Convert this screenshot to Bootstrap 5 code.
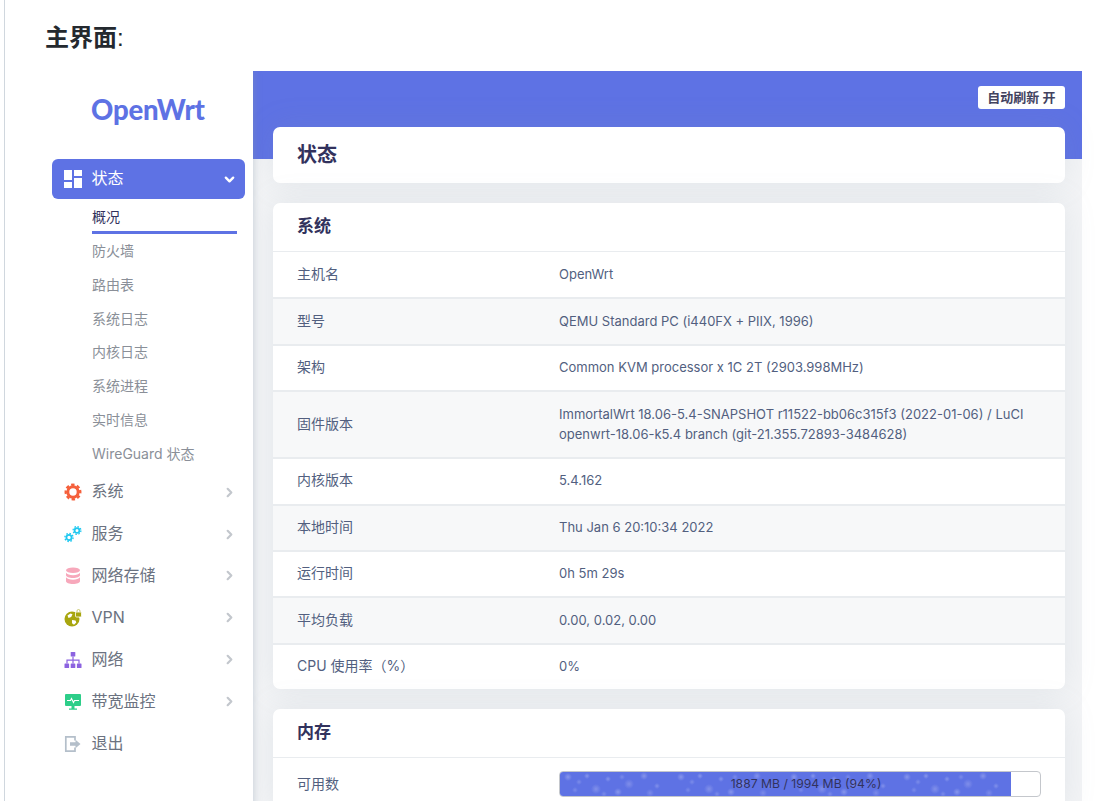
<!DOCTYPE html>
<html lang="zh-CN">
<head>
<meta charset="utf-8">
<title>OpenWrt</title>
<link href="https://cdn.jsdelivr.net/npm/bootstrap@5.3.0/dist/css/bootstrap.min.css" rel="stylesheet">
<style>
html,body{height:801px;overflow:hidden;background:#fff}
body{font-family:"Inter","Noto Sans CJK SC",sans-serif;color:#525f7f}
.docpage{height:801px;margin-left:4px;border-left:1px solid #d0d7de;overflow:hidden}
.doctitle{font-family:"Liberation Sans","Noto Sans CJK SC",sans-serif;font-size:24px;font-weight:700;line-height:32px;color:#24292f;margin:0;padding:22px 0 17px 40px;height:71px}
.doctitle span{font-weight:400}
.shot{width:1077px;height:800px}
.sidenav{width:248px;flex:none;height:100%;background:#fff;box-shadow:0 0 8px rgba(136,152,170,.45);clip-path:inset(0 -14px 0 0);position:relative;z-index:2;padding-left:47px;padding-right:8px}
.brandmark{height:88px;padding-left:39px;padding-top:18px;font-family:"Lato","Noto Sans CJK SC",sans-serif;font-weight:900;font-size:27.5px;line-height:42px;color:#5e72e4;letter-spacing:-.2px}
.menuitem{height:41.9px;display:flex;align-items:center;font-size:16px;color:#6b7280;padding-left:12px;padding-right:10px}
.menuitem>span{position:relative;top:-1px;left:-.5px}
.menuitem svg.ico{width:18px;height:18px;flex:none;margin-right:10px}
.menuitem .chev{margin-left:auto;width:11px;height:11px;flex:none}
.menuitem.onitem{height:40px;background:#5e72e4;color:#fff;border-radius:6px;margin-bottom:1px}
.subitem{height:33.75px;line-height:32px;margin-left:40px;margin-right:8px;font-size:14px;color:#8a8f98}
.subitem.onsub{color:#32325d;height:34px;border-bottom:3px solid #5e72e4;margin-bottom:1px;line-height:33px}
.mainpane{width:829px;flex:none;height:100%;background:#f3f4f6;position:relative}
.bluehead{height:88px;background:#5e72e4;padding:15px 17px 0 0;text-align:right}
.refreshbtn{display:inline-block;background:#fff;border-radius:3px;font-size:13px;font-weight:600;line-height:22px;height:23px;padding:0 9.5px;color:#43435f;vertical-align:top}
.panels{margin:-32px 17px 0 20px;position:relative}
.panelbox{background:#fff;border-radius:7px;box-shadow:0 0 32px rgba(136,152,170,.15);margin-bottom:20px;overflow:hidden}
.pagehead{height:56px;line-height:57px;padding-left:24px;font-size:20px;font-weight:700;color:#32325d}
.sectionhead{height:49px;line-height:46px;padding-left:24px;font-size:17px;font-weight:700;color:#32325d;border-bottom:1px solid #e9ecef}
.infotable{margin:0;font-size:13px;color:#525f7f;--bs-table-bg:transparent;--bs-table-color:#525f7f;table-layout:fixed}
.infotable td{border-bottom:2px solid #e9ecef;padding:0 24px 2px;height:46.4px;vertical-align:middle;line-height:20px}
.infotable tr:nth-child(even) td{background:#f7f8f9}
.infotable tr:last-child td{border-bottom:0;height:45px}
.infotable .labelcol{width:262px;font-size:14px}
.infotable .tallrow td{height:67px}
.infotable tr.memrow:last-child td{height:52px;padding-bottom:0;padding-top:0}
.usagebar{height:26px;border:1px solid #c4c7cc;border-radius:4px;position:relative;overflow:hidden;background:#fff;font-size:12.2px;line-height:24px;color:#32325d;text-align:center;padding-left:12px}
.usagefill{position:absolute;left:0;top:0;bottom:0;background-color:#5e72e4;background-image:radial-gradient(circle at 8px 5px,#8796ec,transparent 4px),radial-gradient(circle at 15px 18px,#7a8ae9,transparent 3px),radial-gradient(circle at 19px 10px,#7c8ce9,transparent 3px),radial-gradient(circle at 27px 4px,#8796ec,transparent 3px),radial-gradient(circle at 36px 17px,#8190ea,transparent 5px),radial-gradient(circle at 44px 22px,#7a8ae9,transparent 3px),radial-gradient(circle at 48px 7px,#8493eb,transparent 3px),radial-gradient(circle at 58px 20px,#8796ec,transparent 4px),radial-gradient(circle at 62px 5px,#7a8ae9,transparent 3px),radial-gradient(circle at 69px 12px,#7f8eea,transparent 5px),radial-gradient(circle at 84px 4px,#8493eb,transparent 4px),radial-gradient(circle at 90px 21px,#7a8ae9,transparent 4px),radial-gradient(circle at 97px 14px,#8190ea,transparent 3px);background-size:113px 26px}
.usagetext{position:relative}
</style>
</head>
<body>
<div class="docpage">
  <h2 class="doctitle">主界面<span>:</span></h2>
  <div class="shot d-flex">
    <nav class="sidenav">
      <div class="brandmark">OpenWrt</div>
      <div class="menuitem onitem">
        <svg class="ico" viewBox="0 0 18 18" fill="#fff"><rect x="0" y="0" width="8" height="10"/><rect x="10" y="0" width="8" height="6"/><rect x="0" y="12" width="8" height="6"/><rect x="10" y="8" width="8" height="10"/></svg>
        <span>状态</span>
        <svg class="chev" viewBox="0 0 12 12" fill="none" stroke="#fff" stroke-width="2.6" stroke-linecap="round" stroke-linejoin="round"><path d="M2 4l4 4 4-4"/></svg>
      </div>
      <div class="subitem onsub">概况</div>
      <div class="subitem">防火墙</div>
      <div class="subitem">路由表</div>
      <div class="subitem">系统日志</div>
      <div class="subitem">内核日志</div>
      <div class="subitem">系统进程</div>
      <div class="subitem">实时信息</div>
      <div class="subitem">WireGuard 状态</div>
      <div class="menuitem">
        <svg class="ico" viewBox="0 0 18 18" fill="none" stroke="#f5603c"><circle cx="9" cy="9" r="5.200" stroke-width="3"/><circle cx="9" cy="9" r="7.300" stroke-width="2.400" stroke-dasharray="3.330 2.400" transform="rotate(-16 9 9)"/></svg>
        <span>系统</span>
        <svg class="chev" viewBox="0 0 12 12" fill="none" stroke="#c3c7cd" stroke-width="2.400" stroke-linecap="round" stroke-linejoin="round"><path d="M4 2l4 4-4 4"/></svg>
      </div>
      <div class="menuitem">
        <svg class="ico" viewBox="0 0 18 18" fill="none" stroke="#1fc8f0"><circle cx="5" cy="12.500" r="2.600" stroke-width="1.800"/><circle cx="5" cy="12.500" r="4.100" stroke-width="1.300" stroke-dasharray="1.600 1.600"/><circle cx="13" cy="5.500" r="2.400" stroke-width="1.800"/><circle cx="13" cy="5.500" r="3.900" stroke-width="1.300" stroke-dasharray="1.500 1.560"/></svg>
        <span>服务</span>
        <svg class="chev" viewBox="0 0 12 12" fill="none" stroke="#c3c7cd" stroke-width="2.400" stroke-linecap="round" stroke-linejoin="round"><path d="M4 2l4 4-4 4"/></svg>
      </div>
      <div class="menuitem">
        <svg class="ico" viewBox="0 0 18 18" fill="#f7a8bb"><ellipse cx="9" cy="3.300" rx="7" ry="2.800"/><path d="M2 5.800c1 1.700 3.700 2.400 7 2.400s6-.7 7-2.400v2.500c0 1.600-3.100 2.800-7 2.800s-7-1.200-7-2.800z"/><path d="M2 10.300c1 1.700 3.700 2.400 7 2.400s6-.7 7-2.400v3.900c0 1.600-3.100 2.800-7 2.800s-7-1.200-7-2.800z"/></svg>
        <span>网络存储</span>
        <svg class="chev" viewBox="0 0 12 12" fill="none" stroke="#c3c7cd" stroke-width="2.400" stroke-linecap="round" stroke-linejoin="round"><path d="M4 2l4 4-4 4"/></svg>
      </div>
      <div class="menuitem">
        <svg class="ico" viewBox="0 0 18 18"><circle cx="8" cy="10" r="7.500" fill="#a8a60f"/><path fill="#fff" d="M3.500 6.500l3-2 2 .8-1.300 2.700-2.700 1zM8 11l3.500.5.800 2-2.300 2.300-2-1.500z"/><rect x="11.500" y="3" width="6" height="5" rx="1" fill="#a8a60f" stroke="#fff" stroke-width=".8"/><path d="M13 3V2a1.500 1.500 0 0 1 3 0v1" fill="none" stroke="#c9c870" stroke-width="1"/></svg>
        <span>VPN</span>
        <svg class="chev" viewBox="0 0 12 12" fill="none" stroke="#c3c7cd" stroke-width="2.400" stroke-linecap="round" stroke-linejoin="round"><path d="M4 2l4 4-4 4"/></svg>
      </div>
      <div class="menuitem">
        <svg class="ico" viewBox="0 0 18 18" fill="#8c63e0"><rect x="6.700" y="1" width="4.600" height="4.600" rx=".6"/><rect x="0.500" y="12.500" width="4.600" height="4.600" rx=".6"/><rect x="6.700" y="12.500" width="4.600" height="4.600" rx=".6"/><rect x="12.900" y="12.500" width="4.600" height="4.600" rx=".6"/><path d="M8.400 5.600h1.200v2.900h6v4h-1.200V9.700H9.600v2.800H8.400V9.700H3.600v2.800H2.400v-4h6z"/></svg>
        <span>网络</span>
        <svg class="chev" viewBox="0 0 12 12" fill="none" stroke="#c3c7cd" stroke-width="2.400" stroke-linecap="round" stroke-linejoin="round"><path d="M4 2l4 4-4 4"/></svg>
      </div>
      <div class="menuitem">
        <svg class="ico" viewBox="0 0 18 18"><rect x="1" y="1" width="16" height="12" rx="1" fill="#2dce89"/><path d="M3 7.500h3.500l1-2 2 4 1-2H15" fill="none" stroke="#fff" stroke-width="1.100"/><path fill="#2dce89" d="M7.500 13h3v2.500H13v1.300H5v-1.300h2.500z"/></svg>
        <span>带宽监控</span>
        <svg class="chev" viewBox="0 0 12 12" fill="none" stroke="#c3c7cd" stroke-width="2.400" stroke-linecap="round" stroke-linejoin="round"><path d="M4 2l4 4-4 4"/></svg>
      </div>
      <div class="menuitem">
        <svg class="ico" viewBox="0 0 18 18"><path d="M11 5.500V1.800H1.800v14.400H11v-3.700" fill="none" stroke="#b4bfca" stroke-width="1.700"/><path fill="#b4bfca" d="M6 7.300h5.500V4.800L16.500 9l-5 4.200v-2.500H6z"/></svg>
        <span>退出</span>
      </div>
    </nav>
    <main class="mainpane">
      <div class="bluehead"><span class="refreshbtn">自动刷新 开</span></div>
      <div class="panels">
        <div class="panelbox pagehead">状态</div>
        <div class="panelbox">
          <div class="sectionhead">系统</div>
          <table class="table infotable">
            <tbody>
              <tr><td class="labelcol">主机名</td><td>OpenWrt</td></tr>
              <tr><td class="labelcol">型号</td><td>QEMU Standard PC (i440FX + PIIX, 1996)</td></tr>
              <tr><td class="labelcol">架构</td><td>Common KVM processor x 1C 2T (2903.998MHz)</td></tr>
              <tr class="tallrow"><td class="labelcol">固件版本</td><td>ImmortalWrt 18.06-5.4-SNAPSHOT r11522-bb06c315f3 (2022-01-06) / LuCI openwrt-18.06-k5.4 branch (git-21.355.72893-3484628)</td></tr>
              <tr><td class="labelcol">内核版本</td><td>5.4.162</td></tr>
              <tr><td class="labelcol">本地时间</td><td>Thu Jan 6 20:10:34 2022</td></tr>
              <tr><td class="labelcol">运行时间</td><td>0h 5m 29s</td></tr>
              <tr><td class="labelcol">平均负载</td><td>0.00, 0.02, 0.00</td></tr>
              <tr><td class="labelcol">CPU 使用率（%）</td><td>0%</td></tr>
            </tbody>
          </table>
        </div>
        <div class="panelbox">
          <div class="sectionhead">内存</div>
          <table class="table infotable">
            <tbody>
              <tr class="memrow"><td class="labelcol">可用数</td><td><div class="usagebar"><div class="usagefill" style="width:94%"></div><span class="usagetext">1887 MB / 1994 MB (94%)</span></div></td></tr>
            </tbody>
          </table>
        </div>
      </div>
    </main>
  </div>
</div>
<script src="https://cdn.jsdelivr.net/npm/bootstrap@5.3.0/dist/js/bootstrap.bundle.min.js"></script>
</body>
</html>
